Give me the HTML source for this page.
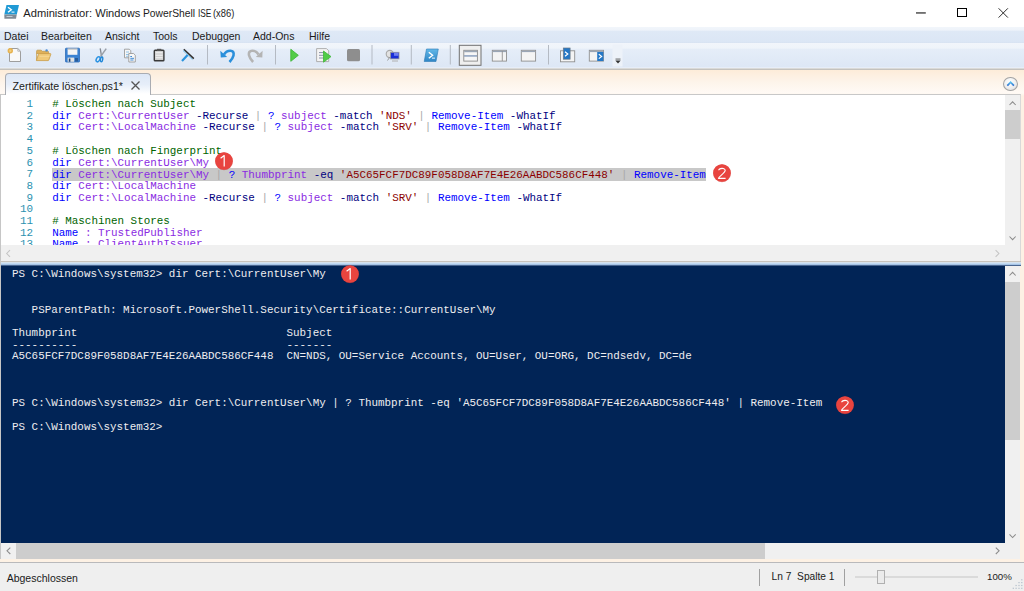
<!DOCTYPE html>
<html><head><meta charset="utf-8">
<style>
*{margin:0;padding:0;box-sizing:border-box}
html,body{width:1024px;height:591px;overflow:hidden;background:#fff;position:relative}
body{font-family:"Liberation Sans",sans-serif;font-size:10.5px;color:#000}
.a{position:absolute}
.t{position:absolute;white-space:pre;line-height:1}
.ui{color:#1a1a1a;font-size:10.5px}
#menu{left:0;top:27px;width:1024px;height:16px;background:linear-gradient(#f2f6fb 0,#eef3fa 3px,#dfe9f6 4.5px,#dbe6f5 15px,#d6e1f0 16px)}
#tool{left:0;top:43px;width:1024px;height:27px;background:linear-gradient(#f1f5fb 0,#eff4fa 5px,#e5edf8 6.5px,#dde7f5 24px,#e6edf8 24px,#e6edf8 25px,#dadad8 25px,#dadad8 26px,#c4c2be 26px)}
#tabs{left:0;top:70px;width:1024px;height:492px;background:linear-gradient(#fdecd9 0,#fdf4ea 12px,#fffaf5 23px,#fdf1e4 26px,#fdf1e4 100%)}
#tab{left:5px;top:73px;width:146px;height:22px;border:1px solid #a9acb2;border-bottom:none;border-radius:4px 4px 0 0;background:linear-gradient(#dde7f6,#e6eef9 50%,#fff 95%)}
#ed{left:0;top:94px;width:1021px;height:168px;border-top:1px solid #c8c8c8;border-left:1px solid #c6c6c6;border-right:1px solid #d9d9d9;background:#fff}
.mono{font-family:"Liberation Mono",monospace;font-size:10.9px;line-height:11.7px;white-space:pre;position:absolute}
.hl{background:#c8c8c8;padding-top:0.6px;padding-bottom:0.4px}
#status{left:0;top:562px;width:1024px;height:29px;border-top:1px solid #b9b9bb;background:#efefef}
.badge{position:absolute;width:18px;height:18px;border-radius:50%;background:#e8423f;color:#fff;font-size:13px;text-align:center;line-height:18px;font-family:"Liberation Sans",sans-serif}
.sb{position:absolute;background:#f0f0f0}
.sep{position:absolute;width:1px;background:#a0a8b4}
</style></head><body>
<!-- title bar -->
<div class="t" style="left:23.3px;top:8.4px;font-size:11.15px;color:#1c1c1c">Administrator:</div><div class="t" style="left:95.2px;top:8.1px;font-size:11.1px;color:#1c1c1c">Windows</div><div class="t" style="left:143px;top:9px;font-size:10.3px;color:#1c1c1c">PowerShell</div><div class="t" style="left:197.6px;top:9px;font-size:10.4px;color:#1c1c1c;transform:scaleX(0.8);transform-origin:0 0">ISE</div><div class="t" style="left:213.4px;top:9px;font-size:10.4px;color:#1c1c1c;transform:scaleX(0.9);transform-origin:0 0">(x86)</div>
<svg class="a" style="left:910px;top:0" width="110" height="24" viewBox="910 0 110 24"><rect x="916" y="12.4" width="9.8" height="1.1" fill="#111"/></svg>
<div class="a" style="left:957px;top:8px;width:10px;height:9px;border:1px solid #000"></div>
<svg class="a" style="left:998px;top:8px" width="11" height="10" viewBox="0 0 11 10"><path d="M0.6 0.3L9.9 9.6M9.9 0.3L0.6 9.6" stroke="#222" stroke-width="0.95"/></svg>
<!-- menu -->
<div id="menu" class="a"></div>
<div class="t ui" style="left:4px;top:31px">Datei</div>
<div class="t ui" style="left:41px;top:31px">Bearbeiten</div>
<div class="t ui" style="left:105px;top:31px">Ansicht</div>
<div class="t ui" style="left:153px;top:31px">Tools</div>
<div class="t ui" style="left:192px;top:31px">Debuggen</div>
<div class="t ui" style="left:253px;top:31px">Add-Ons</div>
<div class="t ui" style="left:309px;top:31px">Hilfe</div>
<!-- toolbar -->
<div id="tool" class="a"></div>
<svg class="a" style="left:0;top:0" width="640" height="70" viewBox="0 0 640 70">
<defs>
<linearGradient id="psg" x1="0" y1="0" x2="0" y2="1"><stop offset="0" stop-color="#5fb3e6"/><stop offset="1" stop-color="#1f74b8"/></linearGradient>
<linearGradient id="psg2" x1="0" y1="0" x2="0" y2="1"><stop offset="0" stop-color="#62b8e8"/><stop offset="1" stop-color="#2f86c6"/></linearGradient>
</defs>
<!-- title icon -->
<path d="M6.5 5 H19 L16.8 14.5 H4.3 Z" fill="#209ad5"/>
<path d="M4.3 14.5 H16.8 L16 18.7 H4.4 Z" fill="#7f8b96"/>
<path d="M8 7.3 L11.3 9.8 L8 12.3" stroke="#fff" stroke-width="1.4" fill="none"/>
<rect x="11.5" y="11.6" width="3" height="1" fill="#fff"/>
<rect x="6.5" y="16" width="6" height="1" fill="#c3ccd4"/>
<!-- toolbar overflow button bg -->
<rect x="612.5" y="44.5" width="10" height="22" fill="#edf2f9"/>
<!-- 1 new -->
<path d="M9.5 48.5 H17.8 L20.5 51.2 V61.5 H9.5 Z" fill="#f8f8f8" stroke="#9e9e9e"/>
<path d="M17.8 48.5 V51.2 H20.5" fill="none" stroke="#b9b9b9"/>
<circle cx="10.3" cy="50.8" r="2.7" fill="#e6b24e"/>
<circle cx="10.3" cy="50.8" r="1.2" fill="#f3cd7d"/>
<!-- 2 open -->
<path d="M36.6 60.3 V51.2 Q36.6 50.2 37.6 50.2 H41.2 L42.3 51.3 H47.8 Q48.6 51.3 48.6 52.1 V53.5 H36.6" fill="#deb05a" stroke="#c49a4a" stroke-width="0.8"/>
<path d="M36.4 60.6 L38.4 54.4 Q38.6 53.6 39.4 53.6 H50.3 Q51 53.6 50.8 54.3 L48.8 60 Q48.6 60.6 48 60.6 Z" fill="#f0c978" stroke="#c99b44" stroke-width="0.8"/>
<path d="M39.5 56.3 H49.5" stroke="#f7dc9c" stroke-width="0.8"/>
<circle cx="46.6" cy="50.4" r="1.2" fill="#4f8fd6"/>
<!-- 3 save -->
<rect x="65.5" y="48.2" width="14" height="13.8" rx="0.6" fill="#3b82d2" stroke="#2d6cb8" stroke-width="0.8"/>
<rect x="67.6" y="48.6" width="9.8" height="6.2" fill="#f5f5f5"/>
<rect x="67.6" y="48.6" width="9.8" height="0.9" fill="#a9a9a9"/>
<rect x="67.6" y="57.6" width="6.6" height="4.2" fill="#e3e3e3"/>
<rect x="68.8" y="58.5" width="1.6" height="3.3" fill="#1f4778"/>
<rect x="75" y="58" width="3" height="3.5" fill="#2a5c98"/>
<!-- 4 cut -->
<path d="M100.2 48.3 L101.6 56.6" stroke="#858b93" stroke-width="1.3"/>
<path d="M106.2 48.6 L100.6 56.6" stroke="#9aa0a8" stroke-width="1.5"/>
<ellipse cx="98.1" cy="59.3" rx="1.7" ry="2.7" transform="rotate(30 98.1 59.3)" fill="none" stroke="#2c93e2" stroke-width="1.5"/>
<ellipse cx="101.6" cy="59.4" rx="1.1" ry="2.4" transform="rotate(10 101.6 59.4)" fill="none" stroke="#1f86d8" stroke-width="1.4"/>
<!-- 5 copy -->
<path d="M124.5 49.2 H129.3 L130.8 50.7 V57.8 H124.5 Z" fill="#f6f6f6" stroke="#9b9b9b" stroke-width="0.9"/>
<path d="M126 52 H129 M126 54.5 H129 M126 56.3 H128.5" stroke="#77b7e6" stroke-width="0.8"/>
<path d="M128.8 53.5 H133.6 L135.3 55.2 V62 H128.8 Z" fill="#f8f8f8" stroke="#9b9b9b" stroke-width="0.9"/>
<path d="M130.3 56.5 H132 M130.3 58.3 H134 M130.3 60 H133.5" stroke="#2f7fd0" stroke-width="0.9"/>
<!-- 6 paste -->
<rect x="154.3" y="50.2" width="9.6" height="10.6" rx="0.8" fill="#cfcfcf" stroke="#3a3a3a" stroke-width="1.4"/>
<rect x="157" y="48.8" width="4.3" height="2.2" fill="#555"/>
<path d="M155.6 52.8 H162.6 M155.6 55.3 H162.6 M155.6 57.8 H162.6" stroke="#f4f4f4" stroke-width="1.1"/>
<!-- 7 clear -->
<path d="M183.8 49.2 L193.8 58.6" stroke="#2f2f2f" stroke-width="1.5"/>
<path d="M183 50.5 L192.5 59.6" stroke="#74c1ef" stroke-width="1"/>
<path d="M182 61 L187.6 55" stroke="#2a93dd" stroke-width="2.2"/>
<!-- separators -->
<g fill="#b4bac3"><rect x="207" y="45" width="1" height="19.5"/><rect x="275" y="45" width="1" height="19.5"/><rect x="371.5" y="45" width="1" height="19.5"/><rect x="410.8" y="45" width="1" height="19.5"/><rect x="449.8" y="45" width="1" height="19.5"/><rect x="548" y="45" width="1" height="19.5"/></g>
<!-- 8 undo -->
<path d="M224 54.5 C 227 49.5, 235 49, 233.5 55.5 C 232.8 58.5, 231 60.5, 229.5 62" stroke="#2a8fdb" stroke-width="2.6" fill="none"/>
<path d="M220.3 50.8 L220.8 57.5 L227.2 56.9 Z" fill="#2a8fdb"/>
<!-- 9 redo (disabled) -->
<path d="M258.6 54.5 C 255.6 49.5, 247.6 49, 249.1 55.5 C 249.8 58.5, 251.6 60.5, 253.1 62" stroke="#b4b4b4" stroke-width="2.6" fill="none"/>
<path d="M262.6 50.8 L262.3 57.5 L255.8 56.9 Z" fill="#b4b4b4"/>
<!-- 10 run -->
<path d="M290.8 49.3 L298.3 55.3 L290.8 61.3 Z" fill="#52cc48" stroke="#3fb83a" stroke-width="0.9" stroke-linejoin="round"/>
<!-- 11 run selection -->
<path d="M316.6 48.6 H326.5 L328.7 50.8 V61.6 H316.6 Z" fill="#f4f4f4" stroke="#a8a8a8" stroke-width="0.9"/>
<path d="M319 52.6 H324 M319 55.3 H324 M319 58 H324" stroke="#8890a8" stroke-width="1"/>
<path d="M323.5 51 L331 56.6 L323.5 62.2 Z" fill="#52cc48" stroke="#3fb83a" stroke-width="0.8" stroke-linejoin="round"/>
<!-- 12 stop -->
<rect x="347" y="49" width="13" height="12.3" rx="1.5" fill="#8e8e8e"/>
<!-- 13 remote -->
<circle cx="389.8" cy="54" r="3.6" fill="#e2e2e2" stroke="#a8a8a8" stroke-width="1.1"/>
<rect x="390.5" y="52.3" width="8.5" height="6.6" fill="#1a2fd6" stroke="#9a9a9a" stroke-width="0.8"/>
<rect x="394" y="52.8" width="4.5" height="3" fill="#6f7ff0"/>
<path d="M392 61 H398" stroke="#b0b0b0" stroke-width="1"/>
<path d="M387.5 60.5 L389.5 57.5" stroke="#888" stroke-width="0.8"/>
<!-- 14 powershell -->
<path d="M426.5 49 H438.3 L436 61.5 H424.2 Z" fill="url(#psg2)" stroke="#2e7bb5" stroke-width="0.6"/>
<path d="M428.8 52.2 L432.6 55.2 L428.8 58.2" stroke="#fff" stroke-width="1.4" fill="none"/>
<rect x="432" y="57.6" width="3" height="1.1" fill="#d6ecfa"/>
<!-- 15 pressed layout button -->
<rect x="459.3" y="45.3" width="21.7" height="20" fill="#efefef" stroke="#707070" stroke-width="1"/>
<rect x="463.8" y="50.3" width="13.6" height="10.8" fill="#f6f6f6" stroke="#8a8a8a" stroke-width="0.9"/>
<rect x="464.2" y="50.7" width="12.8" height="1.5" fill="#9aa6b6"/>
<rect x="464.2" y="55.5" width="12.8" height="0.9" fill="#45679a"/>
<!-- 16 layout right -->
<rect x="492.3" y="50.3" width="14.2" height="10.8" fill="#f4f4f4" stroke="#8f8f8f" stroke-width="0.9"/>
<rect x="492.7" y="50.7" width="13.4" height="1.4" fill="#9aa6b6"/>
<rect x="501.8" y="51" width="0.9" height="10" fill="#8f8f8f"/>
<!-- 17 layout max -->
<rect x="521.3" y="50.3" width="14.3" height="10.8" fill="#f4f4f4" stroke="#8f8f8f" stroke-width="0.9"/>
<rect x="521.7" y="50.7" width="13.5" height="1.4" fill="#9aa6b6"/>
<!-- 18 show script pane top -->
<rect x="560.5" y="50.8" width="14.2" height="11" fill="#f4f4f4" stroke="#8f8f8f" stroke-width="0.9"/>
<rect x="563.3" y="48" width="6.8" height="11.2" fill="#2377c6" stroke="#6b7886" stroke-width="0.7"/>
<path d="M565 51.8 L567.8 54 L565 56.2" stroke="#fff" stroke-width="1.2" fill="none"/>
<!-- 19 script pane right -->
<rect x="589.3" y="50.3" width="14.2" height="10.8" fill="#f4f4f4" stroke="#8f8f8f" stroke-width="0.9"/>
<rect x="589.7" y="50.7" width="13.4" height="1.4" fill="#9aa6b6"/>
<rect x="597.2" y="52" width="6.2" height="9" fill="#2377c6"/>
<path d="M598.8 54.2 L601.6 56.4 L598.8 58.6" stroke="#fff" stroke-width="1.2" fill="none"/>
<!-- 20 overflow -->
<rect x="615.5" y="58.6" width="5" height="0.9" fill="#555"/>
<path d="M615.3 60.6 H620.7 L618 63.4 Z" fill="#333"/>
</svg>

<!-- tab area -->
<div id="tabs" class="a"></div>
<!-- collapse button -->
<div class="a" style="left:1003px;top:76.8px;width:15px;height:14.5px;border-radius:50%;border:1.2px solid #a3a3a3;background:radial-gradient(circle at 45% 35%,#fff,#f0f0f0 50%,#d8d8d8)"></div>
<svg class="a" style="left:1006px;top:80px" width="9" height="7" viewBox="0 0 9 7"><defs><linearGradient id="cb" x1="0" y1="0" x2="0" y2="1"><stop offset="0" stop-color="#5cc0ee"/><stop offset="1" stop-color="#2f6fd0"/></linearGradient></defs><path d="M1.3 5.6L4.6 2.2L7.9 5.6" stroke="url(#cb)" stroke-width="1.8" fill="none"/></svg>
<!-- editor -->
<div id="ed" class="a"></div>
<div id="tab" class="a"></div>
<div class="t ui" style="left:12.5px;top:81px;font-size:10.64px">Zertifikate löschen.ps1*</div>
<svg class="a" style="left:131px;top:81px" width="9" height="9" viewBox="0 0 9 9"><path d="M0.5 0.5L8.5 8.5M8.5 0.5L0.5 8.5" stroke="#555" stroke-width="1.3"/></svg>
<div class="a" style="left:1px;top:95px;width:1004px;height:150px;background:#fff;overflow:hidden">
  <div class="mono" style="left:19px;top:4.0px;color:#2b91af"> 1
 2
 3
 4
 5
 6
 7
 8
 9
10
11
12
13</div>
  <div class="mono" style="left:51.2px;top:4.0px"><span style="color:#006400"># Löschen nach Subject</span>
<span style="color:#0000ff">dir</span> <span style="color:#8a2be2">Cert:\CurrentUser</span> <span style="color:#000080">-Recurse</span> <span style="color:#a9a9a9">|</span> <span style="color:#0000ff">?</span> <span style="color:#8a2be2">subject</span> <span style="color:#000080">-match</span> <span style="color:#8b0000">&#x27;NDS&#x27;</span> <span style="color:#a9a9a9">|</span> <span style="color:#0000ff">Remove-Item</span> <span style="color:#000080">-WhatIf</span>
<span style="color:#0000ff">dir</span> <span style="color:#8a2be2">Cert:\LocalMachine</span> <span style="color:#000080">-Recurse</span> <span style="color:#a9a9a9">|</span> <span style="color:#0000ff">?</span> <span style="color:#8a2be2">subject</span> <span style="color:#000080">-match</span> <span style="color:#8b0000">&#x27;SRV&#x27;</span> <span style="color:#a9a9a9">|</span> <span style="color:#0000ff">Remove-Item</span> <span style="color:#000080">-WhatIf</span>

<span style="color:#006400"># Löschen nach Fingerprint</span>
<span style="color:#0000ff">dir</span> <span style="color:#8a2be2">Cert:\CurrentUser\My</span>
<span class="hl"><span style="color:#0000ff">dir</span> <span style="color:#8a2be2">Cert:\CurrentUser\My</span> <span style="color:#a9a9a9">|</span> <span style="color:#0000ff">?</span> <span style="color:#8a2be2">Thumbprint</span> <span style="color:#000080">-eq</span> <span style="color:#8b0000">&#x27;A5C65FCF7DC89F058D8AF7E4E26AABDC586CF448&#x27;</span> <span style="color:#a9a9a9">|</span> <span style="color:#0000ff">Remove-Item</span></span>
<span style="color:#0000ff">dir</span> <span style="color:#8a2be2">Cert:\LocalMachine</span>
<span style="color:#0000ff">dir</span> <span style="color:#8a2be2">Cert:\LocalMachine</span> <span style="color:#000080">-Recurse</span> <span style="color:#a9a9a9">|</span> <span style="color:#0000ff">?</span> <span style="color:#8a2be2">subject</span> <span style="color:#000080">-match</span> <span style="color:#8b0000">&#x27;SRV&#x27;</span> <span style="color:#a9a9a9">|</span> <span style="color:#0000ff">Remove-Item</span> <span style="color:#000080">-WhatIf</span>

<span style="color:#006400"># Maschinen Stores</span>
<span style="color:#0000ff">Name</span> <span style="color:#8a2be2">:</span> <span style="color:#8a2be2">TrustedPublisher</span>
<span style="color:#0000ff">Name</span> <span style="color:#8a2be2">:</span> <span style="color:#8a2be2">ClientAuthIssuer</span></div>
</div>
<svg class="a" style="left:213.5px;top:151.2px" width="20" height="20" viewBox="0 0 20 20"><circle cx="10" cy="10.25" r="8.9" fill="#c9302d" opacity="0.5"/><circle cx="10" cy="10" r="8.85" fill="#e8443f"/><path d="M6.6 7.2 L10.2 4.6 V15.4" stroke="#fff" stroke-width="1.2" fill="none" stroke-linejoin="round"/></svg>
<svg class="a" style="left:711.5px;top:163.1px" width="20" height="20" viewBox="0 0 20 20"><circle cx="10" cy="10.25" r="8.9" fill="#c9302d" opacity="0.5"/><circle cx="10" cy="10" r="8.85" fill="#e8443f"/><path d="M6.7 7.3 C6.9 4.9, 13.2 4.4, 13.2 7.6 C13.2 9.8, 6.9 13.6, 6.5 15.3 H13.6" stroke="#fff" stroke-width="1.15" fill="none" stroke-linejoin="round"/></svg>
<!-- editor v scrollbar -->
<div class="sb" style="left:1005px;top:95px;width:15px;height:166px"></div>
<div class="a" style="left:1005px;top:110px;width:15px;height:29px;background:#cdcdcd"></div>
<!-- editor h scrollbar -->
<div class="sb" style="left:1px;top:245px;width:1019px;height:16px"></div>
<!-- splitter -->
<div class="a" style="left:1px;top:261px;width:1020px;height:1px;background:#c8c3bc"></div>
<div class="a" style="left:1px;top:262px;width:1020px;height:1px;background:#d6e2ec"></div><div class="a" style="left:1px;top:263px;width:1020px;height:1px;background:#c2daf3"></div><div class="a" style="left:1px;top:264px;width:1020px;height:1px;background:#a6c4e6"></div><div class="a" style="left:1px;top:265px;width:1020px;height:1px;background:#4a6690"></div>
<!-- console -->
<div class="a" style="left:0;top:262px;width:1px;height:297px;background:#c6c6c6"></div>
<div class="a" style="left:1px;top:266px;width:1004px;height:277px;background:#012456;overflow:hidden">
  <div class="mono" style="left:11px;top:3.4px;color:#eeedf0">PS C:\Windows\system32&gt; dir Cert:\CurrentUser\My


   PSParentPath: Microsoft.PowerShell.Security\Certificate::CurrentUser\My

Thumbprint                                Subject
----------                                -------
A5C65FCF7DC89F058D8AF7E4E26AABDC586CF448  CN=NDS, OU=Service Accounts, OU=User, OU=ORG, DC=ndsedv, DC=de



PS C:\Windows\system32&gt; dir Cert:\CurrentUser\My | ? Thumbprint -eq &#x27;A5C65FCF7DC89F058D8AF7E4E26AABDC586CF448&#x27; | Remove-Item

PS C:\Windows\system32&gt;</div>
</div>
<svg class="a" style="left:340.1px;top:264.1px" width="20" height="20" viewBox="0 0 20 20"><circle cx="10" cy="10.25" r="8.9" fill="#c9302d" opacity="0.5"/><circle cx="10" cy="10" r="8.85" fill="#e8443f"/><path d="M6.6 7.2 L10.2 4.6 V15.4" stroke="#fff" stroke-width="1.2" fill="none" stroke-linejoin="round"/></svg>
<svg class="a" style="left:835.3px;top:395.1px" width="20" height="20" viewBox="0 0 20 20"><circle cx="10" cy="10.25" r="8.9" fill="#c9302d" opacity="0.5"/><circle cx="10" cy="10" r="8.85" fill="#e8443f"/><path d="M6.7 7.3 C6.9 4.9, 13.2 4.4, 13.2 7.6 C13.2 9.8, 6.9 13.6, 6.5 15.3 H13.6" stroke="#fff" stroke-width="1.15" fill="none" stroke-linejoin="round"/></svg>
<!-- console scrollbars -->
<div class="sb" style="left:1005px;top:266px;width:15px;height:293px"></div>
<div class="a" style="left:1005px;top:282px;width:15px;height:158px;background:#cdcdcd"></div>
<div class="sb" style="left:1px;top:543px;width:1004px;height:16px"></div>
<div class="a" style="left:16px;top:543px;width:749px;height:16px;background:#cdcdcd"></div>
<svg class="a" style="left:0;top:90px" width="1024" height="480" viewBox="0 90 1024 480" fill="none" stroke="#8c8c8c" stroke-width="1.05">
<path d="M1009.5 105 L1012.6 101.8 L1015.7 105"/>
<path d="M1009.5 236.5 L1012.6 239.7 L1015.7 236.5"/>
<path d="M10 250.2 L6.7 253.5 L10 256.8" stroke="#c4c4c4"/>
<path d="M995.6 250.2 L998.9 253.5 L995.6 256.8" stroke="#c4c4c4"/>
<path d="M1009.5 275.5 L1012.6 272.3 L1015.7 275.5"/>
<path d="M1009.5 534.4 L1012.6 537.6 L1015.7 534.4"/>
<path d="M10.3 547.6 L7 550.8 L10.3 554"/>
<path d="M995.8 547.6 L999.1 550.8 L995.8 554"/>
</svg>
<!-- status -->
<div id="status" class="a"></div>
<div class="t ui" style="left:6.7px;top:573px">Abgeschlossen</div>
<div class="a" style="left:759px;top:569px;width:1px;height:17px;background:#a0a0a0"></div>
<div class="t ui" style="left:771.6px;top:572px;font-size:10.2px">Ln 7  Spalte 1</div>
<div class="a" style="left:844px;top:569px;width:1px;height:17px;background:#a0a0a0"></div>
<div class="a" style="left:855px;top:576px;width:123px;height:2px;background:#dadada"></div>
<div class="a" style="left:877px;top:570px;width:8px;height:14px;background:#ebebeb;border:1px solid #b0b0b0"></div>
<div class="t ui" style="left:987px;top:572px;font-size:9.7px">100%</div>
<svg class="a" style="left:1010px;top:576px" width="14" height="14" viewBox="1010 576 14 14" fill="#b4bfcb"><rect x="1021.2" y="579.2" width="1.2" height="1.2"/><rect x="1021.2" y="582.0" width="1.2" height="1.2"/><rect x="1018.4" y="582.0" width="1.2" height="1.2"/><rect x="1021.2" y="584.9" width="1.2" height="1.2"/><rect x="1018.4" y="584.9" width="1.2" height="1.2"/><rect x="1015.5" y="584.9" width="1.2" height="1.2"/><rect x="1021.2" y="587.7" width="1.2" height="1.2"/><rect x="1018.4" y="587.7" width="1.2" height="1.2"/><rect x="1015.5" y="587.7" width="1.2" height="1.2"/><rect x="1012.7" y="587.7" width="1.2" height="1.2"/></svg>
</body></html>
